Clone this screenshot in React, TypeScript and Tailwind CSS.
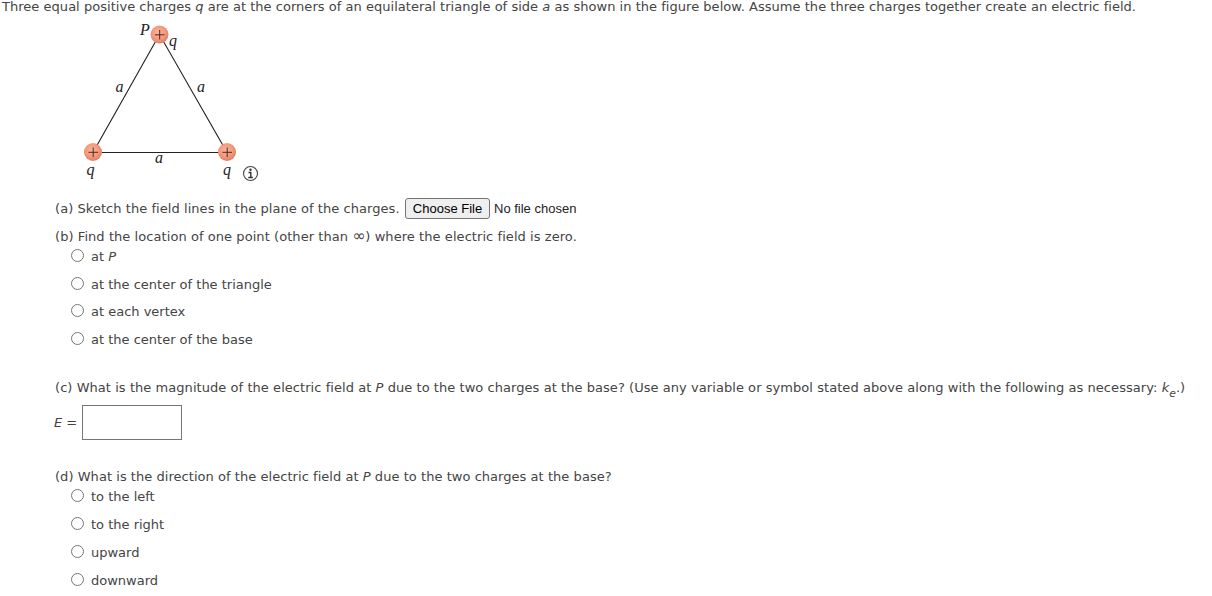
import React from "react";

type Charge = { cx: number; cy: number };

const charges: Charge[] = [
  { cx: 159.5, cy: 34.5 },
  { cx: 93, cy: 152 },
  { cx: 227, cy: 152 },
];

const figureLabels = [
  { text: "P", x: 140, y: 35 },
  { text: "q", x: 169, y: 46 },
  { text: "a", x: 115.5, y: 92 },
  { text: "a", x: 197, y: 92 },
  { text: "a", x: 155, y: 163 },
  { text: "q", x: 86.5, y: 175 },
  { text: "q", x: 223, y: 175 },
];

const locationOptions = [
  { id: "p", label: <>at <i>P</i></>, row: "h-7" },
  { id: "center", label: "at the center of the triangle", row: "h-[27px]" },
  { id: "vertex", label: "at each vertex", row: "h-7" },
  { id: "base", label: "at the center of the base", row: "h-7" },
];

const directionOptions = [
  { id: "left", label: "to the left", row: "h-7" },
  { id: "right", label: "to the right", row: "h-7" },
  { id: "up", label: "upward", row: "h-7" },
  { id: "down", label: "downward", row: "h-5" },
];

// Equilateral triangle with a positive charge at each corner
const TriangleFigure: React.FC = () => (
  <svg width="270" height="170" viewBox="0 16 270 170" className="block">
    <defs>
      <radialGradient id="charge" cx="0.45" cy="0.4" r="0.6">
        <stop offset="0" stopColor="#fab59c" />
        <stop offset="0.6" stopColor="#f39a7e" />
        <stop offset="1" stopColor="#e27d62" />
      </radialGradient>
    </defs>
    <path d="M159.5 34.5 93 152.5H227Z" fill="none" stroke="#222" strokeWidth="1.1" />
    {charges.map(({ cx, cy }) => (
      <g key={`${cx}-${cy}`}>
        <circle cx={cx} cy={cy} r="9" fill="url(#charge)" />
        <path d={`M${cx - 4.5} ${cy + 0.3}h9.5M${cx + 0.2} ${cy - 4.5}v9.5`} stroke="#4a2a24" strokeWidth="1" />
      </g>
    ))}
    <g fontFamily="'Liberation Serif', serif" fontStyle="italic" fontSize="16" fill="#222">
      {figureLabels.map(({ text, x, y }) => (
        <text key={`${x}-${y}`} x={x} y={y}>{text}</text>
      ))}
    </g>
    <circle cx="250.5" cy="173.5" r="7" fill="#fff" stroke="#444" strokeWidth="1.1" />
    <circle cx="250.5" cy="169.8" r="1.2" fill="#333" />
    <path d="M248.5 172.5h2.3v5M248.3 177.5h4.6" fill="none" stroke="#333" strokeWidth="1.4" />
  </svg>
);

type OptionsProps = {
  name: string;
  options: { id: string; label: React.ReactNode; row: string }[];
};

const RadioOptions: React.FC<OptionsProps> = ({ name, options }) => (
  <div className="pl-[71px]">
    {options.map(({ id, label, row }) => (
      <label key={id} className={`flex items-start leading-5 ${row}`}>
        <input
          type="radio"
          name={name}
          className="m-0 mt-[3px] mr-[7px] h-[13px] w-[13px] appearance-none rounded-full border border-[#767676] bg-white"
        />
        <span className="pt-px">{label}</span>
      </label>
    ))}
  </div>
);

export default function App() {
  return (
    <main className="h-[596px] w-[1212px] overflow-hidden bg-white font-['DejaVu_Sans',sans-serif] text-[13px] whitespace-nowrap text-[#444]">
      <p className="h-4 pl-[2px] leading-[14px] tracking-[0.03px]">
        Three equal positive charges <i>q</i> are at the corners of an equilateral triangle of side <i>a</i> as shown in the figure below. Assume the three charges together create an electric field.
      </p>
      <TriangleFigure />

      {/* Part (a) */}
      <div className="mt-3 flex h-[22px] items-center pl-[55px]">
        <span className="w-[345px] tracking-[0.055px]">(a) Sketch the field lines in the plane of the charges.</span>
        <div className="mb-px ml-[5px] flex items-center font-['Liberation_Sans',sans-serif] text-[13px]">
          <button className="h-[21px] w-[85px] rounded-[3px] border border-[#767676] bg-[#efefef] text-center leading-[19px] text-black">
            Choose File
          </button>
          <span className="ml-1 text-[#222]">No file chosen</span>
        </div>
      </div>

      {/* Part (b) */}
      <p className="mt-[7px] h-[19px] pl-[55px] leading-5 tracking-[0.065px]">
        (b) Find the location of one point (other than <span className="text-[15.5px] leading-none">∞</span>) where the electric field is zero.
      </p>
      <RadioOptions name="location" options={locationOptions} />

      {/* Part (c) */}
      <p className="mt-[21px] h-5 pl-[55px] leading-5 tracking-[0.055px]">
        (c) What is the magnitude of the electric field at <i>P</i> due to the two charges at the base? (Use any variable or symbol stated above along with the following as necessary: <i>k</i><sub className="bottom-[-5px] text-[10.8px] italic">e</sub>.)
      </p>
      <div className="mt-[7px] flex h-[35px] items-center pl-[54px]">
        <span className="w-7"><i>E</i> =</span>
        <input type="text" className="h-[35px] w-[100px] border border-[#767676] bg-white" />
      </div>

      {/* Part (d) */}
      <p className="mt-[27px] h-[19px] pl-[55px] leading-5 tracking-[0.045px]">
        (d) What is the direction of the electric field at <i>P</i> due to the two charges at the base?
      </p>
      <RadioOptions name="direction" options={directionOptions} />
    </main>
  );
}
